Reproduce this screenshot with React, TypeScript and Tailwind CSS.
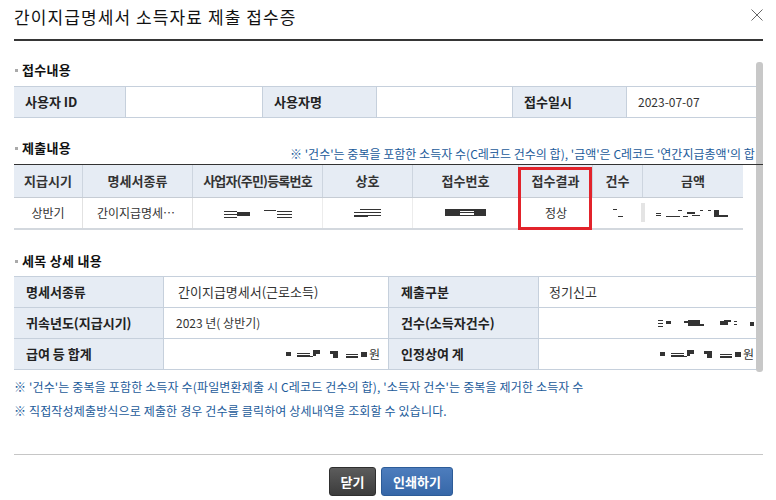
import React from "react";

type Rect = [number, number, number, number];

// redacted values are drawn as little dark blocks
function Mask({ w, h = 10, rects, color = "#333" }: { w: number; h?: number; rects: Rect[]; color?: string }) {
  return (
    <svg width={w} height={h} viewBox={`0 0 ${w} ${h}`} className="inline-block shrink-0" shapeRendering="crispEdges">
      {rects.map((r, i) => (
        <rect key={i} x={r[0]} y={r[1]} width={r[2]} height={r[3]} fill={color} />
      ))}
    </svg>
  );
}

const bizNo: Rect[] = [
  [1, 3, 13, 1], [1, 6, 13, 1], [1, 9, 13, 1], [14, 4, 13, 4],
  [41, 2, 12, 1], [54, 3, 15, 1], [54, 6, 15, 1], [54, 9, 15, 1],
];
const shop: Rect[] = [[6, 1, 21, 1], [0, 4, 27, 1], [14, 7, 13, 1], [0, 7, 14, 2]];
const recvNo: Rect[] = [[0, 1, 15, 7], [15, 1, 14, 2], [15, 4, 14, 1], [15, 7, 14, 1], [29, 1, 12, 7]];
const cnt: Rect[] = [[0, 1, 4, 1], [5, 8, 5, 1]];
const amt: Rect[] = [
  [0, 5, 5, 1], [0, 7, 5, 1], [10, 8, 14, 1], [22, 2, 4, 1], [27, 8, 5, 1], [31, 4, 8, 2],
  [36, 7, 8, 1], [44, 2, 3, 1], [52, 2, 3, 1], [58, 2, 5, 5], [58, 7, 14, 2],
];
const won: Rect[] = [
  [0, 3, 5, 4], [11, 4, 13, 1], [11, 6, 13, 2], [24, 7, 3, 1], [27, 1, 7, 4], [27, 5, 3, 2],
  [44, 2, 8, 3], [47, 5, 5, 4], [60, 5, 12, 1], [60, 7, 12, 2], [75, 3, 6, 5],
];
const people: Rect[] = [
  [0, 2, 5, 1], [0, 5, 5, 1], [0, 8, 5, 1], [8, 3, 5, 3], [26, 3, 7, 2], [30, 2, 12, 6], [38, 6, 8, 2],
  [62, 3, 8, 4], [66, 2, 7, 2], [76, 3, 3, 1], [76, 6, 3, 1], [92, 4, 4, 4],
];

const F = "font-['Noto_Sans_CJK_KR','Noto_Sans_CJK_SC',sans-serif]";

function SectionTitle({ children }: { children: React.ReactNode }) {
  return (
    <div className="flex items-center gap-[4px] leading-[16px]">
      <span className="ml-[1px] w-[3px] h-[3px] bg-[#aaa]" />
      <span className="text-[13px] font-bold text-[#111] tracking-[0.3px]">{children}</span>
    </div>
  );
}

const th = "bg-[#e6ecf4] text-[13px] font-bold text-[#222] flex items-center";

export default function App() {
  return (
    <div className={`w-[776px] h-[500px] bg-white pl-[14px] pr-[13px] ${F}`}>
      {/* header */}
      <div className="h-[41px] border-b-2 border-[#363636] flex justify-between items-start">
        <h1 className="pt-[5px] text-[17px] leading-[24px] tracking-[1.1px] text-[#111]">간이지급명세서 소득자료 제출 접수증</h1>
        <svg width="12" height="12" viewBox="0 0 12 12" className="mt-[9px]">
          <path d="M0.5 0.5 L11.5 11.5 M11.5 0.5 L0.5 11.5" stroke="#666" strokeWidth="1" fill="none" />
        </svg>
      </div>

      {/* scroll area */}
      <div className="relative h-[414px] border-b border-[#c6c6c6] overflow-hidden">
        <div className="pt-[21px]">
          <SectionTitle>접수내용</SectionTitle>
          <div className="mt-[8px] grid grid-cols-[112px_137px_114px_136px_114px_136px] border-t border-[#c6d0dc]">
            <div className={`${th} h-[31px] border-b border-r border-[#c6d0dc] pl-[11px]`}>사용자 ID</div>
            <div className="h-[31px] border-b border-r border-[#c6d0dc]" />
            <div className={`${th} h-[31px] border-b border-r border-[#c6d0dc] pl-[11px]`}>사용자명</div>
            <div className="h-[31px] border-b border-r border-[#c6d0dc]" />
            <div className={`${th} h-[31px] border-b border-r border-[#c6d0dc] pl-[11px]`}>접수일시</div>
            <div className="h-[31px] border-b border-[#c6d0dc] flex items-center pl-[11px] text-[12px] text-[#333]">2023-07-07</div>
          </div>

          {/* 제출내용 */}
          <div className="mt-[22px] flex items-end">
            <div className="w-[276px] shrink-0 mb-[8px]">
              <SectionTitle>제출내용</SectionTitle>
            </div>
            <p className="relative z-10 whitespace-nowrap text-[12px] leading-[14px] tracking-[0.02px] text-[#1c5b9a] mb-[3px]">
              ※ '건수'는 중복을 포함한 소득자 수(C레코드 건수의 합), '금액'은 C레코드 '연간지급총액'의 합
            </p>
          </div>
          <div className="relative z-10 border-t border-[#333]">
            <div className="relative w-[729px]">
              <div className="grid grid-cols-[69px_110px_130px_90px_106px_74px_50px_100px] h-[32px] bg-[#e6ecf4] text-[13px] font-bold text-[#333]">
                <div className="flex items-center justify-center border-r border-[#cdd5df]">지급시기</div>
                <div className="flex items-center justify-center border-r border-[#cdd5df]">명세서종류</div>
                <div className="flex items-center justify-center border-r border-[#cdd5df] tracking-[-0.8px] whitespace-nowrap">사업자(주민)등록번호</div>
                <div className="flex items-center justify-center border-r border-[#cdd5df]">상호</div>
                <div className="flex items-center justify-center border-r border-[#cdd5df]">접수번호</div>
                <div className="flex items-center justify-center border-r border-[#cdd5df]">접수결과</div>
                <div className="flex items-center justify-center border-r border-[#cdd5df]">건수</div>
                <div className="flex items-center justify-center">금액</div>
              </div>
              <div className="grid grid-cols-[69px_110px_130px_90px_106px_74px_50px_100px] h-[33px] bg-white border-t border-[#c6ccd4] border-b-2 border-b-[#d3d8de] text-[12px] text-[#333]">
                <div className="flex items-center justify-center border-r border-[#e2e2e2]">상반기</div>
                <div className="flex items-center justify-center border-r border-[#e2e2e2] pr-[3px]">간이지급명세…</div>
                <div className="flex items-center justify-center border-r border-[#ececec]">
                  <Mask w={70} h={11} rects={bizNo} />
                </div>
                <div className="flex items-center justify-center border-r border-[#ececec]">
                  <Mask w={27} rects={shop} />
                </div>
                <div className="flex items-center justify-center border-r border-[#ececec]">
                  <Mask w={41} rects={recvNo} />
                </div>
                <div className="flex items-center justify-center">정상</div>
                <div className="flex items-center justify-center relative">
                  <Mask w={10} rects={cnt} />
                  <span className="absolute right-[-2px] top-[5px] w-[4px] h-[19px] bg-[#e4e4e4]" />
                </div>
                <div className="flex items-center justify-center">
                  <Mask w={75} rects={amt} />
                </div>
              </div>
              <div className="absolute left-[504px] top-[2px] w-[74px] h-[63px] border-[3px] border-[#e2232b]" />
            </div>
          </div>

          {/* 세목 상세 내용 */}
          <div className="mt-[23px]">
            <SectionTitle>세목 상세 내용</SectionTitle>
          </div>
          <div className="mt-[7px] grid grid-cols-[150px_225px_150px_224px] border-t border-[#c6d0dc] text-[12px] text-[#333]">
            <div className={`${th} h-[31px] border-b border-r border-[#c6d0dc] pl-[12px]`}>명세서종류</div>
            <div className="h-[31px] border-b border-r border-[#c6d0dc] flex items-center pl-[14px] text-[13px]">간이지급명세서(근로소득)</div>
            <div className={`${th} h-[31px] border-b border-r border-[#c6d0dc] pl-[12px]`}>제출구분</div>
            <div className="h-[31px] border-b border-[#c6d0dc] flex items-center pl-[10px] text-[13px]">정기신고</div>

            <div className={`${th} h-[31px] border-b border-r border-[#c6d0dc] pl-[12px]`}>귀속년도(지급시기)</div>
            <div className="h-[31px] border-b border-r border-[#c6d0dc] flex items-center pl-[12px]">2023 년( 상반기)</div>
            <div className={`${th} h-[31px] border-b border-r border-[#c6d0dc] pl-[12px]`}>건수(소득자건수)</div>
            <div className="h-[31px] border-b border-[#c6d0dc] flex items-center justify-end pr-[9px]">
              <Mask w={96} rects={people} />
            </div>

            <div className={`${th} h-[31px] border-b border-r border-[#c6d0dc] pl-[12px]`}>급여 등 합계</div>
            <div className="h-[31px] border-b border-r border-[#c6d0dc] flex items-center justify-end pr-[8px] gap-[1px]">
              <Mask w={82} rects={won} />
              <span>원</span>
            </div>
            <div className={`${th} h-[31px] border-b border-r border-[#c6d0dc] pl-[12px]`}>인정상여 계</div>
            <div className="h-[31px] border-b border-[#c6d0dc] flex items-center justify-end pr-[9px] gap-[1px]">
              <Mask w={82} rects={won} />
              <span>원</span>
            </div>
          </div>

          <div className="mt-[8px] text-[12px] leading-[18px] tracking-[0.15px] text-[#1c5b9a] whitespace-nowrap">
            <p>※ '건수'는 중복을 포함한 소득자 수(파일변환제출 시 C레코드 건수의 합), '소득자 건수'는 중복을 제거한 소득자 수</p>
            <p className="mt-[6px]">※ 직접작성제출방식으로 제출한 경우 건수를 클릭하여 상세내역을 조회할 수 있습니다.</p>
          </div>
        </div>

        {/* scrollbar thumb */}
        <div className="absolute right-0 top-[21px] w-[7px] h-[310px] rounded-[3px] bg-[#c8c8c8]" />
      </div>

      {/* footer */}
      <div className="flex justify-center gap-[5px] pt-[12px] pl-[5px]">
        <button className="w-[47px] h-[29px] rounded-[3px] border border-[#2f2f2f] bg-gradient-to-b from-[#5c5c5c] to-[#3c3c3c] text-white text-[13px] font-bold">
          닫기
        </button>
        <button className="w-[72px] h-[29px] rounded-[3px] border border-[#2d5c98] bg-gradient-to-b from-[#4d7dbd] to-[#3667a8] text-white text-[13px] font-bold">
          인쇄하기
        </button>
      </div>
    </div>
  );
}
